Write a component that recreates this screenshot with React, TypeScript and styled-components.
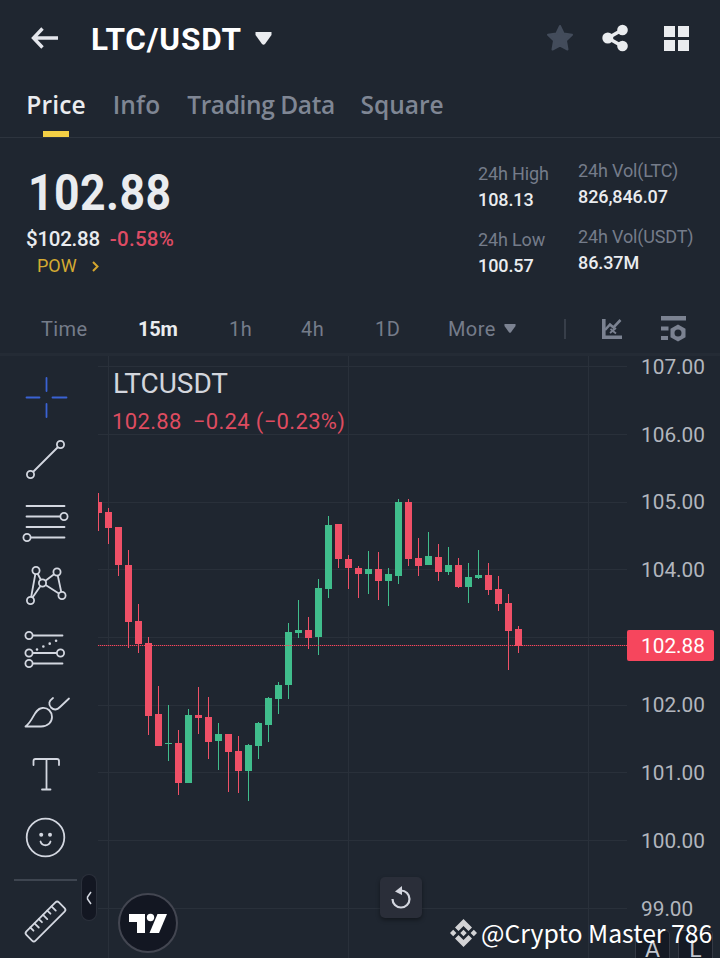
import React from 'react';
import styled, { createGlobalStyle } from 'styled-components';

const c = {
  bg: '#1f2630',
  text: '#eaecef',
  muted: '#848b99',
  dim: '#757c8a',
  red: '#ef5067',
  green: '#40bd8c',
  line: '#2d343e',
  grid: '#29303a',
  icon: '#d3d7e0',
};

const GlobalStyle = createGlobalStyle`
  * { box-sizing: border-box; }
  body { margin: 0; background: ${c.bg}; overflow: hidden; }
`;

const Screen = styled.main`
  width: 720px;
  height: 958px;
  overflow: hidden;
  display: flex;
  flex-direction: column;
  background: ${c.bg};
  color: ${c.text};
  font-family: Roboto, 'Liberation Sans', sans-serif;
  white-space: nowrap;
`;

const Header = styled.header`
  height: 80px;
  flex: none;
  display: flex;
  align-items: center;
  padding: 0 31px 4px;
`;

const Pair = styled.h1`
  margin: 0 0 0 33px;
  width: 164px;
  font-size: 31.5px;
  line-height: 40px;
  font-weight: 700;
  letter-spacing: 0.85px;
  color: #fff;
  padding-top: 3px;
`;

const HeaderActions = styled.div`
  margin-left: auto;
  display: flex;
  align-items: center;
  gap: 28px;
  svg:last-child { margin-left: 8px; }
`;

const Tabs = styled.nav`
  height: 58px;
  flex: none;
  display: flex;
  padding-left: 26px;
  gap: 26px;
  border-bottom: 1px solid ${c.line};
`;

const Tab = styled.div<{ $active?: boolean; $width: number; $spacing: number }>`
  width: ${(p) => p.$width}px;
  display: flex;
  flex-direction: column;
  align-items: center;
  justify-content: space-between;
  padding-top: 8px;
  font-family: 'Open Sans', 'Noto Sans', sans-serif;
  font-size: 24.5px;
  line-height: 34px;
  font-weight: 600;
  letter-spacing: ${(p) => p.$spacing}px;
  color: ${(p) => (p.$active ? c.text : '#7f8694')};
`;

const TabMark = styled.span`
  width: 26px;
  height: 6px;
  background: #f3cf45;
`;

const Summary = styled.section`
  height: 165px;
  flex: none;
  display: grid;
  grid-template-columns: 451px 100px 1fr;
  padding-left: 27px;
`;

const Quote = styled.div`
  display: flex;
  flex-direction: column;
`;

const LastPrice = styled.div`
  margin: 28px 0 0 1px;
  font-size: 49.5px;
  line-height: 54px;
  font-weight: 700;
  letter-spacing: 0.5px;
  transform: scaleX(0.9);
  transform-origin: left;
`;

const FiatRow = styled.div`
  display: flex;
  gap: 10px;
  margin-top: 6px;
  font-size: 20.5px;
  line-height: 26px;
  font-weight: 500;
  letter-spacing: -0.25px;
  margin-left: -1px;
`;

const Loss = styled.span`
  letter-spacing: 0.25px;
  color: #de4c64;
`;

const Tag = styled.div`
  display: flex;
  align-items: center;
  gap: 15px;
  margin: 1px 0 0 10px;
  font-size: 18px;
  line-height: 26px;
  color: #d4aa32;
`;

const Stats = styled.dl<{ $offset: number }>`
  margin: ${(p) => p.$offset}px 0 0;
  display: flex;
  flex-direction: column;
  gap: 14px;
`;

const StatLabel = styled.dt`
  font-size: 18px;
  line-height: 26px;
  letter-spacing: -0.15px;
  color: ${c.dim};
`;

const StatValue = styled.dd`
  margin: 0;
  font-size: 18px;
  line-height: 26px;
  font-weight: 500;
  letter-spacing: -0.1px;
`;

const Intervals = styled.div`
  height: 53px;
  flex: none;
  display: flex;
  align-items: center;
  padding: 1px 34px 0 41px;
  border-bottom: 3px solid #242b35;
`;

const Interval = styled.span<{ $width: number; $active?: boolean }>`
  width: ${(p) => p.$width}px;
  font-size: 20px;
  line-height: 26px;
  font-weight: ${(p) => (p.$active ? 700 : 400)};
  letter-spacing: ${(p) => (p.$active ? -0.2 : 0.4)}px;
  color: ${(p) => (p.$active ? c.text : c.dim)};
  display: flex;
  align-items: center;
  gap: 8px;
`;

const Separator = styled.span`
  width: 2px;
  height: 20px;
  margin-right: 36px;
  background: #373e49;
`;

const IntervalTools = styled.div`
  display: flex;
  align-items: center;
  justify-content: space-between;
  flex: 1;
`;

const ChartArea = styled.section`
  flex: 1;
  min-height: 0;
  display: grid;
  grid-template-columns: 98px 529px 93px;
  position: relative;
`;

const DrawTools = styled.aside`
  padding-top: 10px;
  display: flex;
  flex-direction: column;
  svg { flex: none; }
`;

const ToolDivider = styled.span`
  width: 63px;
  height: 2px;
  margin: 9px 0 9px 14px;
  flex: none;
  background: #3e4550;
`;

const Plot = styled.div`
  position: relative;
`;

const Legend = styled.div`
  position: absolute;
  left: 15px;
  top: 10px;
`;

const Symbol = styled.div`
  font-size: 28px;
  line-height: 36px;
  letter-spacing: -0.05px;
  color: #d3d6dd;
`;

const Change = styled.div`
  display: flex;
  gap: 11px;
  margin: 6px 0 0 -1px;
  font-size: 22px;
  line-height: 28px;
  letter-spacing: 0.35px;
  color: #de4c60;
`;

const PriceAxis = styled.div`
  display: flex;
  flex-direction: column;
  margin-top: -1px;
`;

const AxisPrice = styled.span`
  flex: none;
  height: 67.7px;
  padding-left: 14px;
  font-size: 20.8px;
  line-height: 24px;
  color: #b2b6be;
`;

const CurrentPrice = styled.div`
  flex: none;
  width: 87px;
  height: 31px;
  margin: 4px 0 32.7px;
  padding-left: 14px;
  border-radius: 2px;
  background: #f6465d;
  font-size: 20.8px;
  line-height: 32px;
  color: #fff;
`;

const CollapseHandle = styled.div`
  position: absolute;
  left: 82px;
  top: 519px;
  width: 14px;
  height: 45px;
  border-radius: 7px;
  background: #131722;
  box-shadow: 0 0 0 1px #2b303b;
  display: grid;
  place-items: center;
`;

const ResetButton = styled.div`
  position: absolute;
  left: 282px;
  top: 521px;
  width: 42px;
  height: 41px;
  border-radius: 5px;
  background: #2a2e39;
  box-shadow: 0 2px 4px rgba(0, 0, 0, 0.4);
`;

const Brand = styled.div`
  position: absolute;
  left: 20px;
  top: 537px;
  width: 60px;
  height: 60px;
  border: 2px solid #434651;
  border-radius: 50%;
  background: #131722;
`;

const ScaleButtons = styled.div`
  position: absolute;
  left: 635px;
  top: 574px;
  display: flex;
  gap: 8px;
`;

const ScaleButton = styled.span`
  width: 35px;
  height: 40px;
  border: 1px solid #343944;
  border-radius: 4px;
  background: #151a24;
  color: #c3c7cf;
  font-size: 23px;
  line-height: 38px;
  text-align: center;
`;

const Watermark = styled.div`
  position: absolute;
  left: 450px;
  top: 558px;
  display: flex;
  align-items: center;
  gap: 4px;
  font-family: 'Noto Sans CJK SC', 'Noto Sans', sans-serif;
  font-size: 24.8px;
  line-height: 36px;
  color: #fff;
  svg { margin-top: 2px; }
`;

type Candle = [number, number, number, number, number];

/* direction (1 up, 0 down), high, body top, body bottom, low */
const candles: Candle[] = [
  [0, 493, 502, 513, 531], [0, 508, 512, 528, 544], [0, 527, 527, 565, 576],
  [0, 550, 565, 622, 648], [0, 604, 621, 644, 653], [0, 637, 643, 716, 735],
  [0, 686, 714, 746, 746], [1, 705, 743, 744, 761], [0, 730, 743, 783, 795],
  [1, 709, 715, 783, 783], [0, 687, 715, 718, 734], [0, 697, 717, 742, 759],
  [1, 723, 734, 741, 770], [0, 734, 734, 752, 792], [0, 736, 751, 771, 793],
  [1, 744, 745, 771, 801], [1, 722, 723, 746, 759], [1, 697, 698, 725, 742],
  [1, 682, 685, 699, 714], [1, 623, 632, 685, 699], [1, 600, 630, 633, 638],
  [0, 617, 630, 638, 649], [1, 579, 588, 637, 655], [1, 516, 525, 589, 598],
  [0, 524, 524, 559, 568], [0, 555, 559, 568, 589], [0, 566, 568, 574, 598],
  [1, 551, 569, 574, 594], [0, 552, 569, 581, 600], [1, 568, 574, 581, 606],
  [1, 499, 502, 576, 584], [0, 499, 502, 559, 566], [0, 538, 558, 566, 576],
  [1, 532, 556, 565, 565], [0, 544, 557, 572, 581], [1, 547, 565, 572, 575],
  [0, 558, 565, 587, 588], [1, 563, 577, 587, 603], [1, 550, 575, 578, 579],
  [0, 563, 575, 590, 595], [0, 576, 589, 604, 611], [0, 594, 603, 631, 670],
  [0, 626, 629, 646, 653],
];

const gridRows = [366, 434, 502, 569, 637, 705, 772, 840, 908];

const CandleChart = () => (
  <svg width="529" height="602" viewBox="98 356 529 602" display="block">
    {gridRows.map((y) => <rect key={y} x="98" y={y} width="529" height="1" fill={c.grid} />)}
    {[108, 348, 588].map((x) => <rect key={x} x={x} y="356" width="1" height="602" fill={c.grid} />)}
    {candles.map(([up, high, top, bottom, low], i) => {
      const x = 98 + i * 10;
      return (
        <g key={x} fill={up ? c.green : c.red}>
          <rect x={x} y={high} width="1" height={low - high} />
          <rect x={x - 3} y={top} width="7" height={bottom - top} />
        </g>
      );
    })}
    <path d="M98 645.5H627" stroke="#f6465d" strokeOpacity=".25" />
    <path d="M98 645.5H627" stroke="#f6465d" strokeDasharray="1 1" />
  </svg>
);

const Tool = ({ children, color = c.icon }: { children: React.ReactNode; color?: string }) => (
  <svg width="98" height="63" viewBox="-46 -31 98 63" fill="none" stroke={color} strokeWidth="1.8" strokeLinecap="round" strokeLinejoin="round">
    {children}
  </svg>
);

const Knot = ({ x, y, r = 3.6 }: { x: number; y: number; r?: number }) => (
  <circle cx={x} cy={y} r={r} fill={c.bg} />
);

const DrawingToolbar = () => (
  <DrawTools>
    <Tool color="#3a62d3"><path d="M.5-19V-6M.5 7V20M-19.500.5H-6.500M6.500.5H20.500" /></Tool>
    <Tool><path d="M-15.500 14.500 14.500-15.500" /><Knot x={-15.5} y={14.5} /><Knot x={14.5} y={-15.5} /></Tool>
    <Tool>
      <path d="M-19.500-17H18.500M-19.500-6.500H18M-19.500 4H18.500M-19 14.500H18.500" />
      <Knot x={18} y={-6.5} /><Knot x={-19} y={14.5} />
    </Tool>
    <Tool>
      <path d="M-15.500 14.500-10-15.500-3.500-3-15.500 14.500M-3.500-3 11-14 16 9.500Z" />
      <Knot x={-15.5} y={14.5} /><Knot x={-10} y={-15.5} /><Knot x={-3.5} y={-3} />
      <Knot x={11} y={-14} /><Knot x={16} y={9.5} />
    </Tool>
    <Tool>
      <path d="M-17-13.500H16.500M-17 4H14.500M-17 14.500H16.500" />
      <path d="M-9 .5 16-11" strokeWidth="2.600" strokeDasharray="0 7" />
      <Knot x={-17} y={-13.5} /><Knot x={-17} y={4} /><Knot x={14.5} y={4} /><Knot x={-17} y={14.5} />
    </Tool>
    <Tool>
      <path d="M-20.500 14.500C-12 8-12-3-4-4C2-5 6 0 6 5C6 10 2 14.500-5 14.500Z" />
      <path d="M7-14C3-11 2-8 5-4.500C8-1.500 11-2 14-5L23-13.500" />
    </Tool>
    <Tool>
      <path d="M-12.500-10V-14Q-12.500-16-10.500-16H11Q13-16 13-14V-10M.500-16V14.500M-4 14.500H4.500" />
    </Tool>
    <Tool>
      <circle cx="-.5" cy="-.5" r="18.800" />
      <g fill={c.icon} stroke="none"><circle cx="-4.800" cy="-3.200" r="2" /><circle cx="4" cy="-3.200" r="2" /></g>
      <path d="M-5.500 3.500C-4 8.500 3 8.500 4.500 3.500" />
    </Tool>
    <ToolDivider />
    <Tool>
      <g transform="translate(-.5 .5) rotate(-45)">
        <rect x="-23" y="-6.500" width="46" height="13" rx="2.500" />
        <path d="M-15-6.500v4.500M-9-6.500v6M-3-6.500v4.500M3-6.500v6M9-6.500v4.500M15-6.500v6" />
      </g>
    </Tool>
  </DrawTools>
);

const BackIcon = () => (
  <svg width="27" height="22" viewBox="0 0 27 22" fill="none" stroke="#e4e6ec" strokeWidth="3.400">
    <path d="M11.500 1.500 2.500 11 11.500 20.500M2.500 11H27" />
  </svg>
);

const Caret = ({ width, height, color }: { width: number; height: number; color: string }) => (
  <svg width={width} height={height} viewBox="0 0 16 13"><path d="M0 0H16V3L9.500 12Q8 13.500 6.500 12L0 3Z" fill={color} /></svg>
);

const StarIcon = () => (
  <svg width="28" height="28" viewBox="0 0 28 28">
    <path d="M14 2 17.700 9.600 26 10.800 20 16.600 21.500 25.500 14 21.500 6.500 25.500 8 16.600 2 10.800 10.300 9.600Z" fill="#434c5b" stroke="#434c5b" strokeWidth="2" strokeLinejoin="round" />
  </svg>
);

const ShareIcon = () => (
  <svg width="26" height="28" viewBox="0 0 26 28" fill={c.text} stroke={c.text}>
    <path d="M20 6 6 14 20 22" fill="none" strokeWidth="3.500" />
    <g stroke="none"><circle cx="20.500" cy="6" r="5.300" /><circle cx="5.800" cy="14" r="5.500" /><circle cx="20.500" cy="22" r="5.300" /></g>
  </svg>
);

const GridIcon = () => (
  <svg width="25" height="25" viewBox="0 0 25 25"><path d="M0 0h11v11H0zM14 0h11v11H14zM0 14h11v11H0zM14 14h11v11H14z" fill={c.text} /></svg>
);

const LineChartIcon = () => (
  <svg width="20" height="20" viewBox="0 0 20 20" fill="none" stroke="#7b8291">
    <path d="M1.800 0V18.200H20" strokeWidth="3.600" />
    <path d="M3 11 8 5.500 11.500 8.500 18.500 1" strokeWidth="2.600" />
    <path d="M8 14 14 9M8.500 10 14 14.500" strokeWidth="1.800" />
  </svg>
);

const SettingsIcon = () => (
  <svg width="25" height="26" viewBox="0 0 25 26" fill="#7b8291">
    <path d="M0 0H25V4.500H0ZM0 10.500H7.500V14.500H0ZM0 20H7V24H0Z" />
    <path fillRule="evenodd" d="M17 8.500 24.500 12.700V21.300L17 25.500 9.500 21.300V12.700ZM17 13.500A3.500 3.500 0 1 0 17 20.500A3.500 3.500 0 1 0 17 13.500Z" />
  </svg>
);

const BrandMark = () => (
  <svg width="56" height="56" viewBox="0 0 56 56" fill="#fff" display="block">
    <path d="M9 19H25V38H17V27H9Z" /><circle cx="30.500" cy="22.500" r="3.700" /><path d="M37.500 19H47L39 38H29.500Z" />
  </svg>
);

const ResetIcon = () => (
  <svg width="42" height="41" viewBox="0 0 42 41" display="block">
    <path d="M12.500 21A8.500 8.500 0 1 0 21 12.500" fill="none" stroke="#d3d6df" strokeWidth="2.200" transform="translate(0 1)" />
    <path d="M15 14.500 22 9V18Z" fill="#d3d6df" />
  </svg>
);

const DiamondLogo = () => (
  <svg width="27" height="28" viewBox="0 0 27 28" fill="#d3d3d5">
    <path d="M13.500 0 22 8.500 18.500 12 13.500 7 8.500 12 5 8.500ZM13.500 28 5 19.500 8.500 16 13.500 21 18.500 16 22 19.500ZM13.500 10.800 16.700 14 13.500 17.200 10.300 14ZM3.200 10.800 6.400 14 3.200 17.200 0 14ZM23.800 10.800 27 14 23.800 17.200 20.600 14Z" />
  </svg>
);

const Stat = ({ label, value }: { label: string; value: string }) => (
  <div><StatLabel>{label}</StatLabel><StatValue>{value}</StatValue></div>
);

export default function App() {
  return (
    <>
      <GlobalStyle />
      <Screen>
        <Header>
          <BackIcon />
          <Pair>LTC/USDT</Pair>
          <Caret width={17} height={13} color={c.text} />
          <HeaderActions><StarIcon /><ShareIcon /><GridIcon /></HeaderActions>
        </Header>
        <Tabs>
          <Tab $active $width={60} $spacing={0.2}>Price<TabMark /></Tab>
          <Tab $width={49} $spacing={0.2}>Info</Tab>
          <Tab $width={148} $spacing={-0.4}>Trading Data</Tab>
          <Tab $width={82} $spacing={0}>Square</Tab>
        </Tabs>
        <Summary>
          <Quote>
            <LastPrice>102.88</LastPrice>
            <FiatRow><span>$102.88</span><Loss>-0.58%</Loss></FiatRow>
            <Tag>
              POW
              <svg width="7" height="11" viewBox="0 0 7 11" fill="none" stroke="#d4a52d" strokeWidth="2"><path d="M1 1 5.500 5.500 1 10" /></svg>
            </Tag>
          </Quote>
          <Stats $offset={23}>
            <Stat label="24h High" value="108.13" />
            <Stat label="24h Low" value="100.57" />
          </Stats>
          <Stats $offset={20}>
            <Stat label="24h Vol(LTC)" value="826,846.07" />
            <Stat label="24h Vol(USDT)" value="86.37M" />
          </Stats>
        </Summary>
        <Intervals>
          <Interval $width={97}>Time</Interval>
          <Interval $width={91} $active>15m</Interval>
          <Interval $width={72}>1h</Interval>
          <Interval $width={74}>4h</Interval>
          <Interval $width={73}>1D</Interval>
          <Interval $width={116}>More <Caret width={12} height={9} color="#7b8291" /></Interval>
          <Separator />
          <IntervalTools><LineChartIcon /><SettingsIcon /></IntervalTools>
        </Intervals>
        <ChartArea>
          <DrawingToolbar />
          <Plot>
            <CandleChart />
            <Legend>
              <Symbol>LTCUSDT</Symbol>
              <Change><span>102.88</span><span>−0.24 (−0.23%)</span></Change>
            </Legend>
            <Brand><BrandMark /></Brand>
            <ResetButton><ResetIcon /></ResetButton>
          </Plot>
          <PriceAxis>
            <AxisPrice>107.00</AxisPrice>
            <AxisPrice>106.00</AxisPrice>
            <AxisPrice>105.00</AxisPrice>
            <AxisPrice>104.00</AxisPrice>
            <CurrentPrice>102.88</CurrentPrice>
            <AxisPrice>102.00</AxisPrice>
            <AxisPrice>101.00</AxisPrice>
            <AxisPrice>100.00</AxisPrice>
            <AxisPrice>99.00</AxisPrice>
          </PriceAxis>
          <CollapseHandle>
            <svg width="6" height="14" viewBox="0 0 6 14" fill="none" stroke={c.icon} strokeWidth="1.500"><path d="M5 1 1.500 6V8L5 13" /></svg>
          </CollapseHandle>
          <ScaleButtons><ScaleButton>A</ScaleButton><ScaleButton>L</ScaleButton></ScaleButtons>
          <Watermark><DiamondLogo />@Crypto Master 786</Watermark>
        </ChartArea>
      </Screen>
    </>
  );
}
